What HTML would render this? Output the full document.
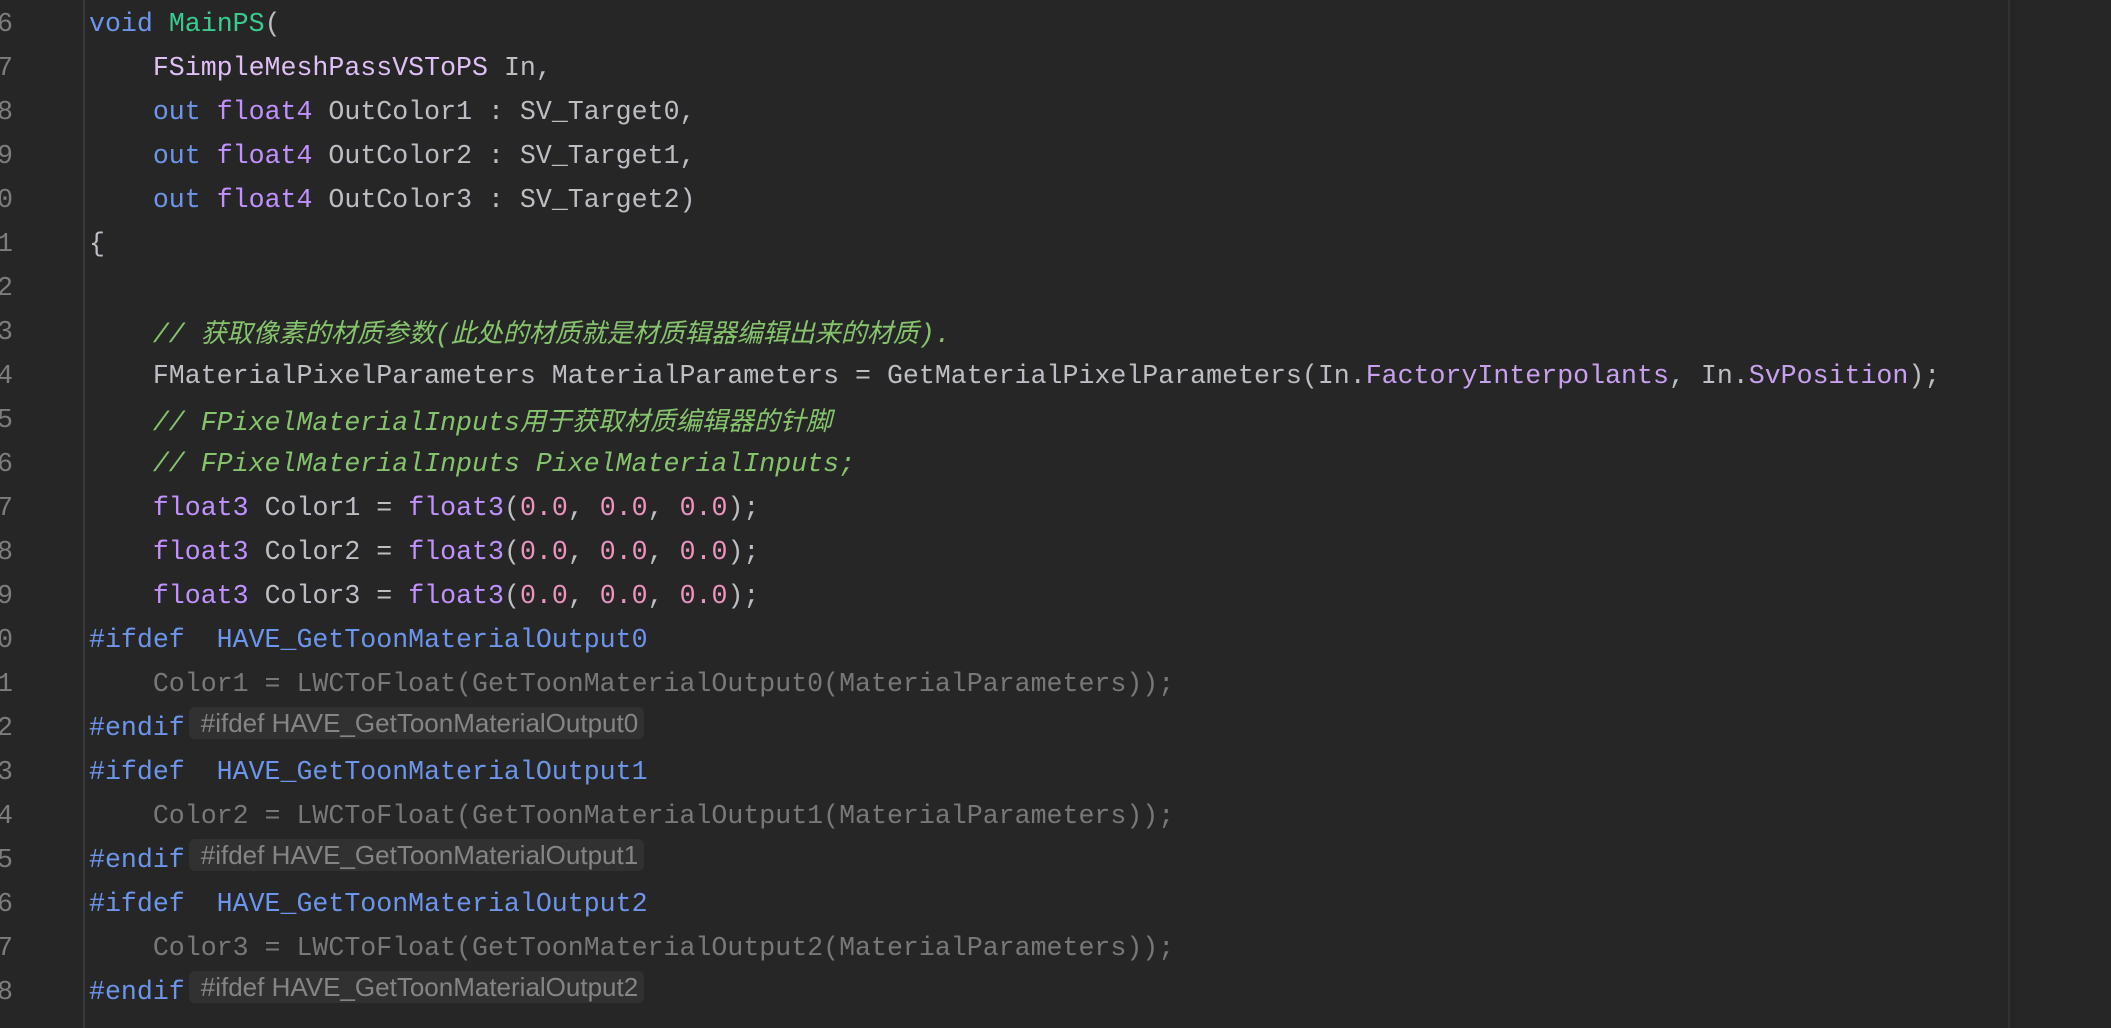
<!DOCTYPE html>
<html><head><meta charset="utf-8"><style>
html,body{margin:0;padding:0;background:#262626;width:2111px;height:1028px;overflow:hidden}
.g{position:absolute;left:83px;top:0;width:2px;height:1028px;background:#3a3a3a}
.r{position:absolute;left:2008px;top:0;width:2px;height:1028px;background:#333}
.n{position:absolute;left:-7px;width:20px;text-align:right;font:26.6px "Liberation Mono",monospace;color:#7d7d7d;height:44px;line-height:44px}
.l{position:absolute;left:89px;white-space:pre;font:26.6px "Liberation Mono","Noto Sans CJK SC",monospace;color:#bcbec4;height:44px;line-height:44px}
.k{color:#6c95eb}.t{color:#c191ff}.f{color:#39cc8f}.s{color:#e0bff7}.c{color:#85c46c;font-style:italic}
.c .z{font-family:"Noto Sans CJK SC",sans-serif;font-size:26px}
.p{color:#ed94c0}.m{color:#c9a0f0}.x{color:#787878}
.h{display:inline-block;background:#313131;color:#858585;font:26px "Liberation Sans",sans-serif;border-radius:6px;padding:0 6px 0 12px;line-height:32px;height:32px;vertical-align:3px;margin-left:4px}
</style></head><body>
<div class="g"></div><div class="r"></div>
<div class="n" style="top:2px">6</div>
<div class="n" style="top:46px">7</div>
<div class="n" style="top:90px">8</div>
<div class="n" style="top:134px">9</div>
<div class="n" style="top:178px">0</div>
<div class="n" style="top:222px">1</div>
<div class="n" style="top:266px">2</div>
<div class="n" style="top:310px">3</div>
<div class="n" style="top:354px">4</div>
<div class="n" style="top:398px">5</div>
<div class="n" style="top:442px">6</div>
<div class="n" style="top:486px">7</div>
<div class="n" style="top:530px">8</div>
<div class="n" style="top:574px">9</div>
<div class="n" style="top:618px">0</div>
<div class="n" style="top:662px">1</div>
<div class="n" style="top:706px">2</div>
<div class="n" style="top:750px">3</div>
<div class="n" style="top:794px">4</div>
<div class="n" style="top:838px">5</div>
<div class="n" style="top:882px">6</div>
<div class="n" style="top:926px">7</div>
<div class="n" style="top:970px">8</div>

<div class="l" style="top:2px"><span class="k">void</span> <span class="f">MainPS</span>(</div>
<div class="l" style="top:46px">    <span class="s">FSimpleMeshPassVSToPS</span> In,</div>
<div class="l" style="top:90px">    <span class="k">out</span> <span class="t">float4</span> OutColor1 : SV_Target0,</div>
<div class="l" style="top:134px">    <span class="k">out</span> <span class="t">float4</span> OutColor2 : SV_Target1,</div>
<div class="l" style="top:178px">    <span class="k">out</span> <span class="t">float4</span> OutColor3 : SV_Target2)</div>
<div class="l" style="top:222px">{</div>
<div class="l" style="top:310px">    <span class="c">// <span class="z">获取像素的材质参数</span>(<span class="z">此处的材质就是材质辑器编辑出来的材质</span>).</span></div>
<div class="l" style="top:354px">    FMaterialPixelParameters MaterialParameters = GetMaterialPixelParameters(In.<span class="m">FactoryInterpolants</span>, In.<span class="m">SvPosition</span>);</div>
<div class="l" style="top:398px">    <span class="c">// FPixelMaterialInputs<span class="z">用于获取材质编辑器的针脚</span></span></div>
<div class="l" style="top:442px">    <span class="c">// FPixelMaterialInputs PixelMaterialInputs;</span></div>
<div class="l" style="top:486px">    <span class="t">float3</span> Color1 = <span class="t">float3</span>(<span class="p">0.0</span>, <span class="p">0.0</span>, <span class="p">0.0</span>);</div>
<div class="l" style="top:530px">    <span class="t">float3</span> Color2 = <span class="t">float3</span>(<span class="p">0.0</span>, <span class="p">0.0</span>, <span class="p">0.0</span>);</div>
<div class="l" style="top:574px">    <span class="t">float3</span> Color3 = <span class="t">float3</span>(<span class="p">0.0</span>, <span class="p">0.0</span>, <span class="p">0.0</span>);</div>
<div class="l k" style="top:618px">#ifdef  HAVE_GetToonMaterialOutput0</div>
<div class="l x" style="top:662px">    Color1 = LWCToFloat(GetToonMaterialOutput0(MaterialParameters));</div>
<div class="l" style="top:706px"><span class="k">#endif</span><span class="h">#ifdef HAVE_GetToonMaterialOutput0</span></div>
<div class="l k" style="top:750px">#ifdef  HAVE_GetToonMaterialOutput1</div>
<div class="l x" style="top:794px">    Color2 = LWCToFloat(GetToonMaterialOutput1(MaterialParameters));</div>
<div class="l" style="top:838px"><span class="k">#endif</span><span class="h">#ifdef HAVE_GetToonMaterialOutput1</span></div>
<div class="l k" style="top:882px">#ifdef  HAVE_GetToonMaterialOutput2</div>
<div class="l x" style="top:926px">    Color3 = LWCToFloat(GetToonMaterialOutput2(MaterialParameters));</div>
<div class="l" style="top:970px"><span class="k">#endif</span><span class="h">#ifdef HAVE_GetToonMaterialOutput2</span></div>
</body></html>
